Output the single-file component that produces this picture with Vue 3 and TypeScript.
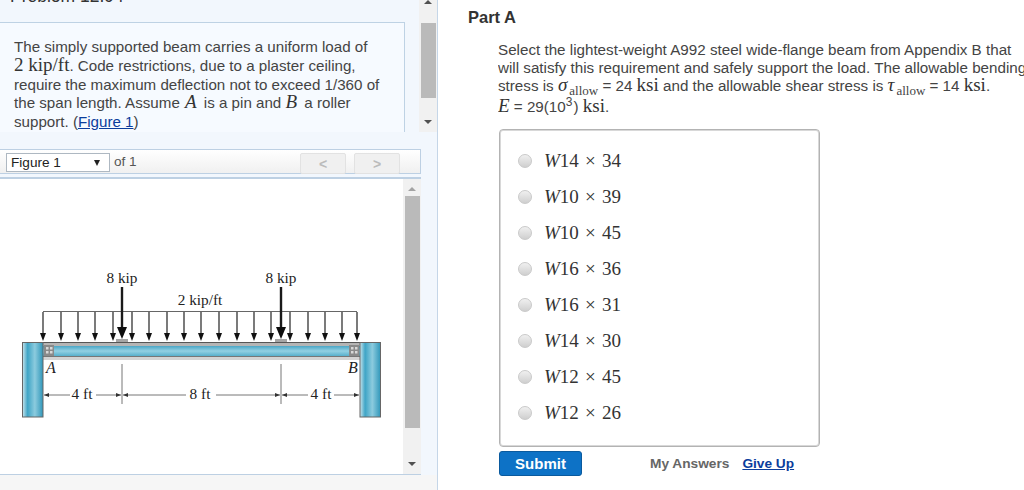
<script setup lang="ts">
const options: [string, string][] = [
  ['14', '34'], ['10', '39'], ['10', '45'], ['16', '36'],
  ['16', '31'], ['14', '30'], ['12', '45'], ['12', '26'],
]
const loadX: number[] = [43, 61, 78, 95, 113, 132, 149, 167, 184, 201, 219, 237, 254, 271, 290, 308, 325, 342, 357]
</script>

<template>
  <div class="page">
    <aside class="left">
      <div class="problem">
        <div class="problem-body">
          <h1 class="title">Problem 12.94</h1>
          <div class="statement">
            <p>
              The simply supported beam carries a uniform load of<br />
              <span class="math big">2 kip/ft</span>. Code restrictions, due to a plaster ceiling,<br />
              require the maximum deflection not to exceed 1/360 of<br />
              the span length. Assume <i class="math big var-a">A</i> is a pin and <i class="math big var-b">B</i> a roller<br />
              support. (<a href="#">Figure 1</a>)
            </p>
          </div>
        </div>
        <div class="scrollbar sb-top">
          <span class="arrow up dark"></span>
          <span class="thumb thumb-top"></span>
          <span class="arrow down dark"></span>
        </div>
      </div>

      <div class="toolbar">
        <div class="select"><span>Figure 1</span><span class="caret"></span></div>
        <span class="of">of 1</span>
        <div class="pager">
          <button class="page-btn">&lt;</button>
          <button class="page-btn">&gt;</button>
        </div>
      </div>

      <div class="figure">
        <div class="figure-canvas">
          <svg class="beam" width="403" height="295" viewBox="0 179 403 295">
            <defs>
              <linearGradient id="col" x1="0" x2="1" y1="0" y2="0">
                <stop offset="0" stop-color="#c8e4ec" />
                <stop offset="0.25" stop-color="#3fa5c6" />
                <stop offset="0.6" stop-color="#8ccbde" />
                <stop offset="1" stop-color="#3097ba" />
              </linearGradient>
              <linearGradient id="bar" x1="0" x2="0" y1="0" y2="1">
                <stop offset="0" stop-color="#4aa6c6" />
                <stop offset="0.5" stop-color="#93d0e2" />
                <stop offset="1" stop-color="#58b0cc" />
              </linearGradient>
            </defs>

            <text class="lbl" x="122" y="283" text-anchor="middle">8 kip</text>
            <text class="lbl" x="281" y="283" text-anchor="middle">8 kip</text>
            <text class="lbl" x="200" y="305" text-anchor="middle">2 kip/ft</text>

            <line x1="43" x2="357" y1="311.5" y2="311.5" stroke="#666" stroke-width="1" />
            <g v-for="x in loadX" :key="x">
              <line :x1="x" :x2="x" y1="312" y2="334" stroke="#222" stroke-width="1.2" />
              <path :d="`M${x - 3} 333 L${x + 3} 333 L${x} 341 Z`" fill="#111" />
            </g>

            <g v-for="x in [122, 281]" :key="'p' + x">
              <line :x1="x" :x2="x" y1="287" y2="330" stroke="#1a1a1a" stroke-width="2.4" />
              <path :d="`M${x - 5} 327 L${x + 5} 327 L${x} 339 Z`" fill="#0d0d0d" />
              <rect :x="x - 6" y="339" width="12" height="3" fill="#a5a5a5" />
            </g>

            <rect x="43" y="342" width="317" height="1" fill="#555" />
            <rect x="43" y="343" width="317" height="3" fill="#b5b5b5" />
            <rect x="43" y="346" width="317" height="10" fill="url(#bar)" />
            <rect x="43" y="356" width="317" height="1" fill="#777" />
            <rect x="43" y="357" width="317" height="3" fill="#d4d4d4" />
            <rect x="44" y="345" width="10" height="11" fill="#8a8a8a" />
            <rect x="349" y="345" width="10" height="11" fill="#8a8a8a" />
            <g fill="#d8d8d8">
              <rect x="46" y="347" width="2.5" height="2.5" /><rect x="50" y="347" width="2.5" height="2.5" />
              <rect x="46" y="351" width="2.5" height="2.5" /><rect x="50" y="351" width="2.5" height="2.5" />
              <rect x="351" y="347" width="2.5" height="2.5" /><rect x="355" y="347" width="2.5" height="2.5" />
              <rect x="351" y="351" width="2.5" height="2.5" /><rect x="355" y="351" width="2.5" height="2.5" />
            </g>

            <rect x="22.5" y="342.5" width="20.5" height="74.5" fill="url(#col)" stroke="#666" />
            <rect x="360" y="342.5" width="20.5" height="74.5" fill="url(#col)" stroke="#666" />

            <text class="lbl ital" x="46" y="373">A</text>
            <text class="lbl ital" x="348" y="373">B</text>

            <g stroke="#777" stroke-width="1">
              <line x1="122" x2="122" y1="364" y2="404" />
              <line x1="281" x2="281" y1="364" y2="404" />
              <line x1="44" x2="70" y1="395" y2="395" />
              <line x1="96" x2="121" y1="395" y2="395" />
              <line x1="123" x2="186" y1="395" y2="395" />
              <line x1="216" x2="280" y1="395" y2="395" />
              <line x1="282" x2="308" y1="395" y2="395" />
              <line x1="334" x2="359" y1="395" y2="395" />
            </g>
            <g fill="#333">
              <path d="M44 395 l5 -2 v4 Z" /><path d="M121 395 l-5 -2 v4 Z" />
              <path d="M123 395 l5 -2 v4 Z" /><path d="M280 395 l-5 -2 v4 Z" />
              <path d="M282 395 l5 -2 v4 Z" /><path d="M359 395 l-5 -2 v4 Z" />
            </g>
            <text class="lbl" x="82" y="399" text-anchor="middle">4 ft</text>
            <text class="lbl" x="200" y="399" text-anchor="middle">8 ft</text>
            <text class="lbl" x="321" y="399" text-anchor="middle">4 ft</text>
          </svg>
        </div>
        <div class="scrollbar sb-fig">
          <span class="arrow up light"></span>
          <span class="thumb thumb-fig"></span>
          <span class="arrow down dark"></span>
        </div>
      </div>
      <div class="footer"></div>
    </aside>

    <main class="right">
      <h2 class="part">Part A</h2>
      <div class="question">
        <p>Select the lightest-weight A992 steel wide-flange beam from Appendix B that</p>
        <p>will satisfy this requirement and safely support the load. The allowable bending</p>
        <p>stress is <i class="math big">σ</i><sub class="math">allow</sub> = 24 <span class="math big">ksi</span> and the allowable shear stress is <i class="math big">τ</i><sub class="math">allow</sub> = 14 <span class="math big">ksi</span>.</p>
        <p class="last"><i class="math big">E</i> = 29(10<sup>3</sup>) <span class="math big">ksi</span>.</p>
      </div>

      <div class="answers">
        <label v-for="o in options" :key="o.join()" class="option">
          <span class="radio"></span>
          <span class="math choice"><i>W</i>{{ o[0] }} × {{ o[1] }}</span>
        </label>
      </div>

      <div class="actions">
        <button class="submit">Submit</button>
        <span class="my">My Answers</span>
        <a href="#" class="give">Give Up</a>
      </div>
    </main>
  </div>
</template>

<style scoped>
.page {
  display: flex;
  width: 1024px;
  height: 490px;
  overflow: hidden;
  background: #fff;
  font-family: "Liberation Sans", Arial, sans-serif;
  color: #333;
}
p { margin: 0; }
.left {
  width: 437px;
  height: 490px;
  flex: none;
  box-sizing: content-box;
  background: #f2f7fd;
  border-right: 1px solid #c5d6e8;
  display: flex;
  flex-direction: column;
}
.problem {
  height: 132px;
  display: flex;
  flex: none;
}
.problem-body {
  width: 419px;
  overflow: hidden;
}
.title {
  margin: -16px 0 0 10px;
  height: 38px;
  font-size: 17.5px;
  line-height: 24px;
  font-weight: 400;
  color: #333;
}
.statement {
  width: 405px;
  height: 200px;
  box-sizing: border-box;
  background: #f6faff;
  border: 1px solid #bed2e4;
  border-left: 0;
  padding: 15px 0 0 14px;
  font-size: 15.15px;
  line-height: 18.8px;
  color: #444;
  white-space: nowrap;
}
.math { font-family: "Liberation Serif", "Times New Roman", serif; }
.big { font-size: 19px; line-height: 0; color: #333; }
.var-a { margin: 0 3px 0 1px; }
.var-b { margin-right: 3px; }
a { color: #0b3d9c; }
.scrollbar {
  width: 18px;
  flex: none;
  background: #f1f1f1;
  display: flex;
  flex-direction: column;
  align-items: center;
  box-sizing: border-box;
  position: relative;
}
.thumb { width: 15px; background: #bababa; display: block; }
.thumb-top { position: absolute; top: 23px; height: 75px; left: 2px; }
.thumb-fig { position: absolute; top: 17px; height: 232px; left: 2px; }
.arrow { position: absolute; left: 5px; width: 0; height: 0; border-left: 4px solid transparent; border-right: 4px solid transparent; }
.arrow.up { border-bottom: 4px solid #505050; }
.arrow.up.light { border-bottom-color: #a3a3a3; }
.arrow.down { border-top: 4px solid #505050; }
.sb-top .arrow.up { top: 0; }
.sb-top .arrow.down { bottom: 8px; }
.sb-fig .arrow.up { top: 8px; }
.sb-fig .arrow.down { bottom: 8px; }
.toolbar {
  margin-top: 17px;
  width: 421px;
  height: 25px;
  box-sizing: border-box;
  flex: none;
  display: flex;
  align-items: flex-start;
  padding: 3px 0 0 6px;
  border: 1px solid #bdd0e3;
  border-left: 0;
  background: linear-gradient(#fff, #f0f0f0);
  font-size: 13.6px;
  color: #555;
}
.select {
  width: 104px;
  height: 19px;
  box-sizing: border-box;
  background: #fff;
  border: 1px solid #aeb8c2;
  padding-left: 4px;
  display: flex;
  align-items: center;
  justify-content: space-between;
  padding-right: 9px;
  color: #222;
  line-height: 17px;
}
.caret {
  width: 0; height: 0;
  border-left: 3px solid transparent;
  border-right: 3px solid transparent;
  border-top: 6px solid #222;
}
.of { margin-left: 4px; line-height: 17px; }
.pager { margin-left: auto; margin-right: 20px; display: flex; gap: 8px; }
.page-btn {
  width: 46px;
  height: 21px;
  padding: 1px 0 0;
  background: #f0f0f0;
  border: 1px solid #e2e2e2;
  border-radius: 2px;
  color: #bbb;
  font-family: "Liberation Sans", sans-serif;
  font-size: 14px;
  font-weight: 700;
}
.figure {
  margin-top: 3px;
  width: 421px;
  height: 298px;
  box-sizing: border-box;
  flex: none;
  display: flex;
  border-top: 2px solid #bdd0e3;
  border-bottom: 1px solid #bdd0e3;
  background: #fff;
}
.figure-canvas { width: 403px; flex: none; }
.beam { display: block; }
.lbl { font-family: "Liberation Serif", serif; font-size: 15.3px; fill: #222; }
.ital { font-style: italic; font-size: 16px; }
.footer { flex: 1; width: 437px; background: #f6f6f6; }

.right {
  flex: 1;
  min-width: 0;
  overflow: hidden;
  padding: 0 0 0 30px;
}
.part {
  margin: 8px 0 0;
  font-size: 16.5px;
  line-height: 18px;
  font-weight: 700;
  color: #333;
}
.question {
  margin: 15px 0 0 30px;
  width: 526px;
  overflow: hidden;
  font-size: 15.2px;
  line-height: 18px;
  color: #444;
  white-space: nowrap;
}
.question sub { font-size: 13px; line-height: 0; margin-left: 2px; }
.question sup { font-size: 12px; line-height: 0; margin-right: 1px; }
.question .last { margin-top: 3px; }
.answers {
  margin: 13px 0 0 31px;
  width: 321px;
  height: 318px;
  box-sizing: border-box;
  border: 1px solid #b3b3b3;
  border-radius: 4px;
  padding: 13px 0 0 18px;
  display: flex;
  flex-direction: column;
  box-shadow: inset 0 0 0 1px #d8d8d8;
}
.option {
  height: 36px;
  display: flex;
  align-items: center;
  gap: 6px;
}
.radio {
  width: 14px;
  height: 14px;
  border-radius: 50%;
  border: 1px solid #c9c9c9;
  box-sizing: border-box;
  background: linear-gradient(#f0f0f0, #cfcfcf);
}
.choice { font-size: 19px; word-spacing: 1.5px; color: #333; margin-left: 6px; }
.actions {
  margin: 4px 0 0 31px;
  display: flex;
  align-items: center;
  height: 25px;
  font-size: 13.7px;
  font-weight: 700;
}
.submit {
  width: 83px;
  height: 25px;
  padding: 0;
  background: #0d72c6;
  border: 1px solid #0a5a9e;
  border-radius: 3px;
  color: #fff;
  font-family: "Liberation Sans", sans-serif;
  font-size: 15px;
  font-weight: 700;
}
.my { margin-left: 68px; color: #666; }
.give { margin-left: 13px; color: #0b3d9c; }
</style>
